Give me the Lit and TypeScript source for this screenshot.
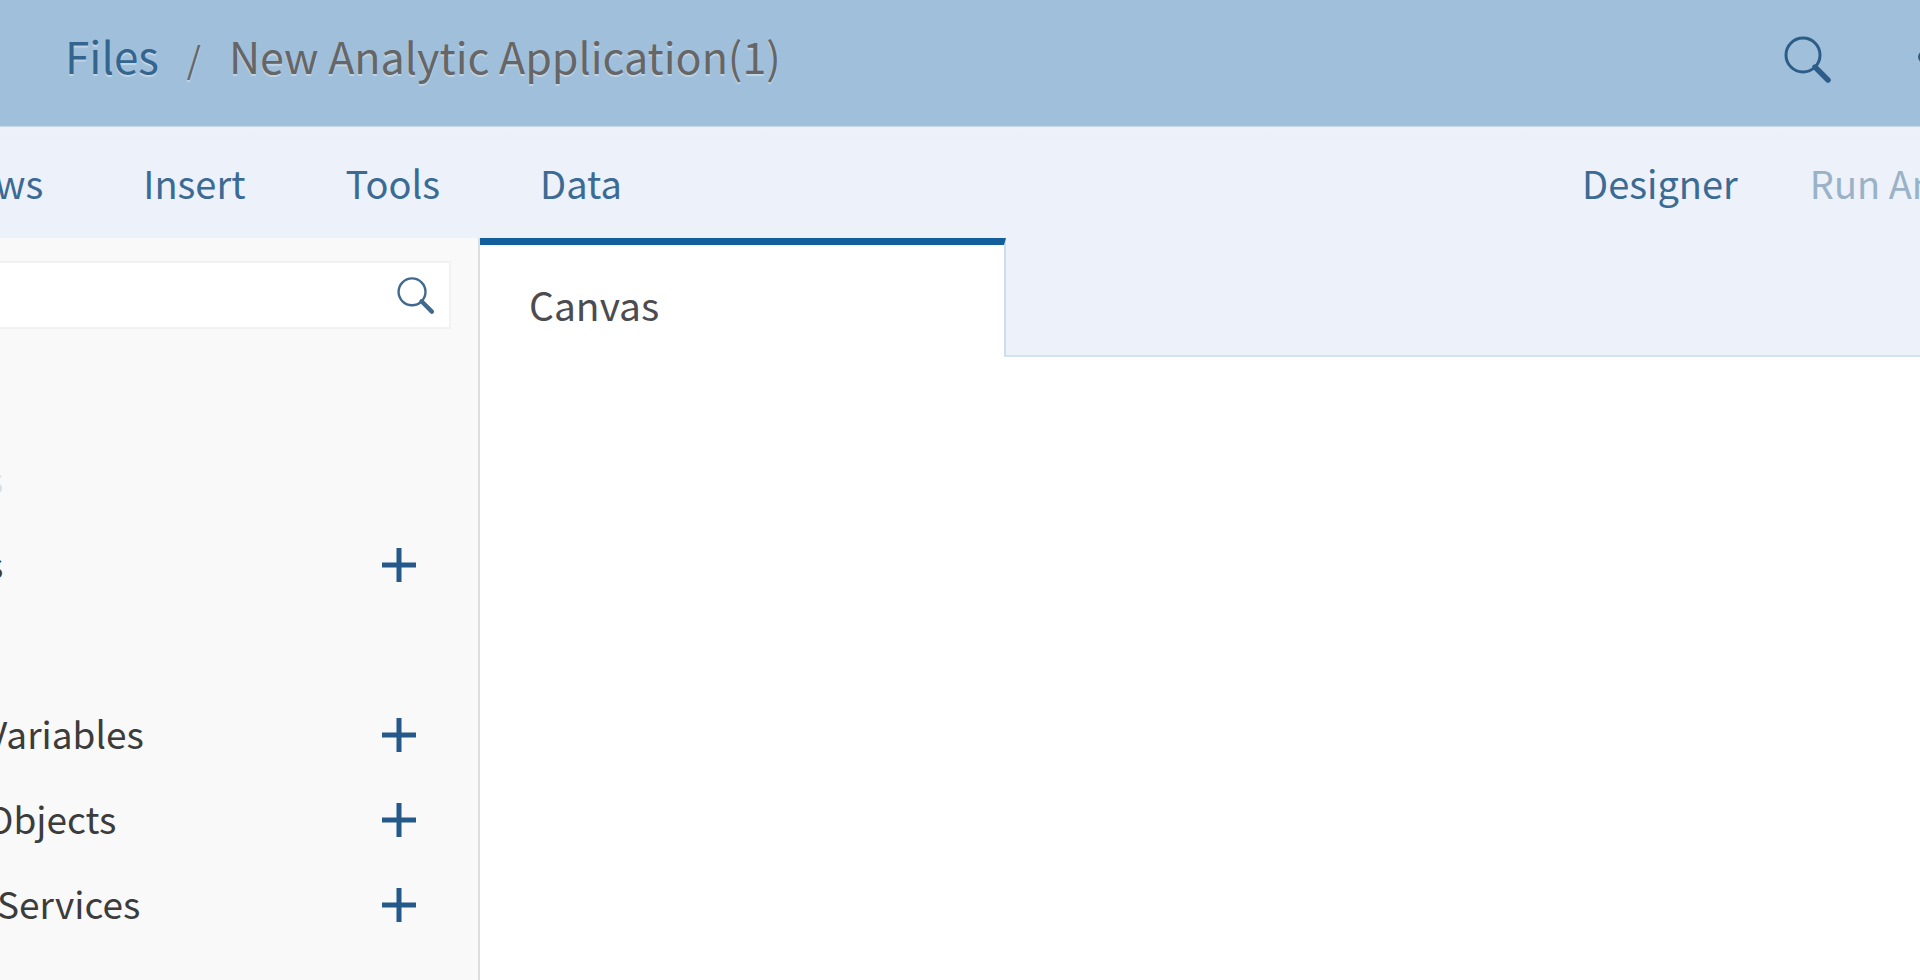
import { LitElement, html, css, nothing } from "lit";
import { customElement, property } from "lit/decorators.js";
import { classMap } from "lit/directives/class-map.js";

const lens = html`
  <svg class="lens" viewBox="0 0 48 48" fill="none" stroke="currentColor" aria-hidden="true">
    <circle cx="19" cy="20" r="17" stroke-width="3" />
    <path d="M31 32 44 45" stroke-width="5.4" stroke-linecap="round" />
  </svg>`;

const plus = html`
  <svg class="plus" viewBox="0 0 36 36" fill="none" stroke="currentColor" stroke-width="5" aria-hidden="true">
    <path d="M18 1v34M1 18h34" />
  </svg>`;

const controls = css`
  button {
    padding: 0;
    border: 0;
    background: none;
    color: inherit;
    font: inherit;
    white-space: nowrap;
    cursor: pointer;
  }
  svg {
    display: block;
  }
`;

@customElement("app-header")
class AppHeader extends LitElement {
  static styles = [controls, css`
    :host {
      display: flex;
      align-items: center;
      justify-content: space-between;
      height: 127px;
      box-sizing: border-box;
      padding: 0 0 14px 65px;
      overflow: hidden;
      background: #a0bfda;
      border-bottom: 1px solid #c6d9e9;
      color: #2c5d88;
    }
    .crumbs {
      display: flex;
      align-items: baseline;
      gap: 28px;
      font-size: 44px;
      line-height: 60px;
      white-space: nowrap;
      text-shadow: 0 2px 1px #c3d6e6;
    }
    a {
      color: #34658f;
      text-decoration: none;
    }
    .rule {
      color: #666;
      font-size: 36px;
    }
    .current {
      color: #666;
      font-size: 43px;
    }
    .actions {
      display: flex;
      align-items: center;
      gap: 86px;
      width: 136px;
      padding-top: 6px;
    }
    .actions button {
      flex: none;
    }
    .lens,
    .share {
      width: 48px;
      height: 48px;
    }
  `];
  render() {
    return html`
      <nav class="crumbs" aria-label="Breadcrumb">
        <a href="#files">Files</a>
        <span class="rule">/</span>
        <span class="current">New Analytic Application(1)</span>
      </nav>
      <div class="actions">
        <button aria-label="Search">${lens}</button>
        <button aria-label="Share">
          <svg class="share" viewBox="0 0 48 48" fill="none" stroke="currentColor" stroke-width="3" aria-hidden="true">
            <circle cx="6" cy="22" r="6" fill="currentColor" stroke="none" />
            <path d="M6 22 36 8M6 22l30 14" />
          </svg>
        </button>
      </div>`;
  }
}

@customElement("app-menu")
class AppMenu extends LitElement {
  static styles = [controls, css`
    :host {
      display: flex;
      align-items: center;
      justify-content: space-between;
      height: 111px;
      overflow: hidden;
      background: linear-gradient(#ecf2f7, #ecf1fa 16px);
      color: #3b6b94;
      font-size: 38px;
      line-height: 56px;
    }
    .menus {
      display: flex;
      gap: 100px;
      margin-left: -5px;
    }
    .modes {
      display: flex;
      gap: 72px;
      width: 338px;
    }
    .modes button:disabled {
      color: #9ab2c8;
    }
  `];
  render() {
    return html`
      <nav class="menus" aria-label="Main menu">
        <button>ws</button>
        <button>Insert</button>
        <button>Tools</button>
        <button>Data</button>
      </nav>
      <div class="modes">
        <button>Designer</button>
        <button disabled>Run An</button>
      </div>`;
  }
}

interface Entry {
  label: string;
  add?: boolean;
  cut?: boolean;
  muted?: boolean;
}

@customElement("outline-panel")
class OutlinePanel extends LitElement {
  @property({ attribute: false }) entries: Entry[] = [];
  static styles = [controls, css`
    :host {
      display: block;
      box-sizing: border-box;
      overflow: hidden;
      padding-top: 23px;
      background: #f9f9f9;
      border-right: 2px solid #dedede;
    }
    .search {
      display: flex;
      align-items: center;
      height: 64px;
      margin-right: 27px;
      background: #fff;
      border: 2px solid #f2f2f0;
      border-left: 0;
      color: #41698d;
    }
    input {
      flex: 1;
      min-width: 0;
      height: 100%;
      box-sizing: border-box;
      border: 0;
      outline: 0;
      padding: 0 16px;
      background: none;
      font: inherit;
    }
    .search button {
      padding: 0 14px 0 0;
    }
    .lens {
      width: 38px;
      height: 38px;
    }
    ul {
      list-style: none;
      margin: 108px 0 0;
      padding: 0;
    }
    li {
      display: flex;
      align-items: center;
      justify-content: space-between;
      height: 85px;
      padding-right: 61px;
      color: #3c3c3c;
      font-size: 37px;
      line-height: 56px;
    }
    .label {
      margin-left: -3px;
      padding-bottom: 4px;
    }
    .label.cut {
      margin-left: -14px;
    }
    .label.muted {
      color: #ddd;
    }
    li button {
      color: #25598a;
    }
    .plus {
      width: 36px;
      height: 36px;
    }
  `];
  render() {
    return html`
      <div class="search">
        <input type="text" aria-label="Search outline" />
        <button aria-label="Search">${lens}</button>
      </div>
      <ul>
        ${this.entries.map((e) => html`
          <li>
            <span class=${classMap({ label: true, cut: !!e.cut, muted: !!e.muted })}>${e.label}</span>
            ${e.add ? html`<button aria-label="Add">${plus}</button>` : nothing}
          </li>`)}
      </ul>`;
  }
}

@customElement("canvas-area")
class CanvasArea extends LitElement {
  static styles = [controls, css`
    :host {
      display: block;
      background: #fff;
    }
    .tabs {
      display: flex;
      height: 119px;
    }
    .tab {
      width: 526px;
      box-sizing: border-box;
      padding: 6px 49px 0;
      background: #fff;
      border-top: 7px solid #125f9c;
      border-right: 2px solid #cfdeed;
      color: #4c4c50;
      font-size: 39px;
      line-height: 56px;
      text-align: left;
    }
    .rest {
      flex: 1;
      background: #ecf1fa;
      border-bottom: 2px solid #d3e1ee;
    }
  `];
  render() {
    return html`
      <div class="tabs" role="tablist">
        <button class="tab" role="tab" aria-selected="true">Canvas</button>
        <div class="rest"></div>
      </div>`;
  }
}

@customElement("app-root")
class AppRoot extends LitElement {
  static styles = css`
    :host {
      display: flex;
      flex-direction: column;
      min-height: 100vh;
      overflow: hidden;
      background: #fff;
      font-family: "Noto Sans CJK SC", "Open Sans", sans-serif;
    }
    main {
      flex: 1;
      display: grid;
      grid-template-columns: 480px 1fr;
    }
  `;
  private entries: Entry[] = [
    { label: "s", cut: true, muted: true },
    { label: "s", cut: true, add: true },
    { label: "" },
    { label: "Variables", cut: true, add: true },
    { label: "Objects", cut: true, add: true },
    { label: "Services", add: true },
  ];
  render() {
    return html`
      <app-header></app-header>
      <app-menu></app-menu>
      <main>
        <outline-panel .entries=${this.entries}></outline-panel>
        <canvas-area></canvas-area>
      </main>`;
  }
}
